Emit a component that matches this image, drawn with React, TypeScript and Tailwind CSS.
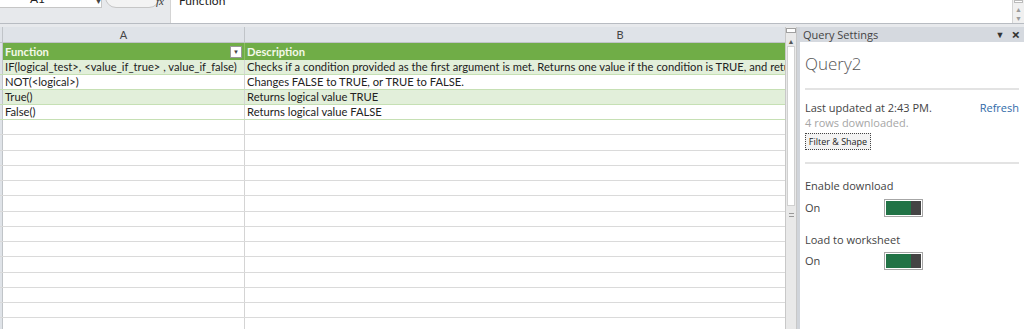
import React from "react";

const rows: { a: string; b: string; band: boolean }[] = [
  { a: "IF(logical_test>, <value_if_true> ,  value_if_false)", b: "Checks if a condition provided as the first argument is met. Returns one value if the condition is TRUE, and returns a different value if FALSE.", band: true },
  { a: "NOT(<logical>)", b: "Changes FALSE to TRUE, or TRUE to FALSE.", band: false },
  { a: "True()", b: "Returns logical value TRUE", band: true },
  { a: "False()", b: "Returns logical value FALSE", band: false },
];

function Toggle() {
  return (
    <div className="flex h-[18px] w-[39px] border border-[#a6a6a6] bg-white p-[1px]">
      <div className="flex-1 bg-[#217346]" />
      <div className="w-[10px] bg-[#444444]" />
    </div>
  );
}

export default function App() {
  const empty = Array.from({ length: 14 });
  return (
    <div
      className="w-[1024px] h-[329px] overflow-hidden bg-white flex flex-col text-[#222]"
      style={{ fontFamily: "Lato, 'Noto Sans', sans-serif" }}
    >
      {/* formula bar */}
      <div className="h-[23px] flex bg-[#e7e9ec] shrink-0">
        <div className="w-[170px] flex items-start relative overflow-hidden">
          <div className="w-[102px] h-[8px] bg-white border-b border-r border-[#c6c6c6] relative overflow-hidden">
            <span className="absolute left-[30px] top-[-8px] text-[12px] leading-[14px]">A1</span>
            <span className="absolute left-[95px] top-[-2px] text-[7px] leading-[7px] text-[#444]">▼</span>
          </div>
          <div className="absolute left-[105px] top-[-14px] w-[55px] h-[22px] rounded-full border border-[#c6c6c6] bg-[#f3f3f3]" />
          <span className="absolute left-[156px] top-[-5px] text-[11px] italic leading-[12px] text-[#333]" style={{ fontFamily: "'Liberation Serif', serif" }}>fx</span>
        </div>
        <div className="flex-1 bg-white border-l border-[#d4d4d4] relative overflow-hidden">
          <span className="absolute left-[8px] top-[-6px] text-[12px] leading-[14px]">Function</span>
        </div>
        <div className="w-[12px] bg-[#f0f0f0] border-l border-[#d4d4d4] flex flex-col items-center text-[7px] leading-[9px] text-[#9a9a9a]">
          <span className="h-[4px] w-[9px] border border-[#bbb] bg-white" />
          <span className="mt-[2px]">▲</span>
          <span>▼</span>
        </div>
      </div>
      <div className="h-[4px] bg-[#e7e9ec] border-t border-[#b8bcc2] shrink-0" />

      {/* main */}
      <div className="flex flex-1 min-h-0">
        {/* grid */}
        <div className="w-[785px] flex flex-col overflow-hidden">
          <div className="flex h-[16px] bg-[#dfe3e8] border-b border-[#c0c4c8] text-[11px] leading-[15px] text-[#444] shrink-0">
            <div className="w-[3px] shrink-0 border-r border-[#c0c4c8]" />
            <div className="w-[242px] shrink-0 text-center border-r border-[#c0c4c8]">A</div>
            <div className="w-[750px] shrink-0 text-center">B</div>
          </div>
          {/* header row */}
          <div className="flex h-[17px] shrink-0 text-[11.2px] leading-[16px] font-bold text-[#f4f9e9]">
            <div className="w-[3px] bg-[#dfe3e8] border-r border-[#c0c4c8]" />
            <div className="w-[242px] bg-[#70ad47] px-[2px] flex items-center justify-between border-r border-[#8cbf64]">
              <span>Function</span>
              <span className="w-[12px] h-[12px] bg-white border border-[#999] flex items-center justify-center text-[6px] text-[#444] font-normal leading-none">▼</span>
            </div>
            <div className="flex-1 bg-[#70ad47] px-[2px] flex items-center">Description</div>
          </div>
          {rows.map((r, i) => (
            <div key={i} className={`flex h-[15px] shrink-0 text-[11.2px] leading-[14px] border-b border-[#c6e0b4] ${r.band ? "bg-[#e2efda]" : "bg-white"}`}>
              <div className="w-[3px] bg-[#dfe3e8] border-r border-[#c0c4c8]" />
              <div className="w-[242px] px-[2px] whitespace-nowrap overflow-hidden border-r border-[#d4d4d4]">{r.a}</div>
              <div className="flex-1 px-[2px] whitespace-nowrap overflow-hidden">{r.b}</div>
            </div>
          ))}
          {empty.map((_, i) => (
            <div key={i} className="flex h-[15.25px] shrink-0 border-b border-[#dadada]">
              <div className="w-[3px] bg-[#dfe3e8] border-r border-[#c0c4c8]" />
              <div className="w-[242px] border-r border-[#d4d4d4]" />
              <div className="flex-1" />
            </div>
          ))}
        </div>

        {/* scrollbar */}
        <div className="w-[12px] bg-[#e9e9e9] border-l border-r border-[#c8c8c8] flex flex-col items-center relative">
          <div className="mt-[1px] w-[10px] h-[5px] border border-[#a0a0a0] bg-white" />
          <span className="mt-[4px] text-[7px] leading-[8px] text-[#555]">▲</span>
          <div className="mt-[1px] w-[8px] h-[160px] bg-white border border-[#d0d0d0]" />
          <div className="absolute top-[186px] left-[3px] w-[5px] h-[4px] border-t border-b border-[#999]" />
        </div>

        {/* query settings panel */}
        <div className="flex-1 flex flex-col border-l-[3px] border-[#d0d4da]" style={{ fontFamily: "'Open Sans', 'Noto Sans', sans-serif" }}>
          <div className="h-[15px] bg-[#d5d9df] flex items-center justify-between pl-[3px] pr-[4px] text-[11px] leading-[14px] text-[#444]">
            <span>Query Settings</span>
            <span className="flex items-center gap-[7px] text-[#333]">
              <span className="text-[9px] leading-none">▼</span>
              <span className="text-[15px] font-bold leading-none">×</span>
            </span>
          </div>
          <div className="flex-1 px-[5px]">
            <div className="pt-[11px] pb-[2px] text-[17px] leading-[22px] font-light text-[#555]">Query2</div>
            <div className="mt-[11px] h-[2px] bg-[#e3e3e3]" />
            <div className="mt-[10px] flex justify-between text-[11px] leading-[15px] text-[#444]">
              <span>Last updated at 2:43 PM.</span>
              <span className="text-[#2f6aa8]">Refresh</span>
            </div>
            <div className="text-[11px] leading-[15px] text-[#a6a6a6]">4 rows downloaded.</div>
            <div className="mt-[3px] w-[66px] h-[17px] border border-dotted border-[#444] bg-[#f3f3f3] text-[9px] leading-[15px] text-center text-[#222] whitespace-nowrap">Filter &amp; Shape</div>
            <div className="mt-[12px] h-[2px] bg-[#e3e3e3]" />
            <div className="mt-[14px] text-[11px] leading-[15px] text-[#444]">Enable download</div>
            <div className="mt-[6px] flex items-center h-[18px]">
              <span className="w-[79px] text-[11px] text-[#444]">On</span>
              <Toggle />
            </div>
            <div className="mt-[15px] text-[11px] leading-[15px] text-[#444]">Load to worksheet</div>
            <div className="mt-[5px] flex items-center h-[18px]">
              <span className="w-[79px] text-[11px] text-[#444]">On</span>
              <Toggle />
            </div>
          </div>
        </div>
      </div>
    </div>
  );
}
